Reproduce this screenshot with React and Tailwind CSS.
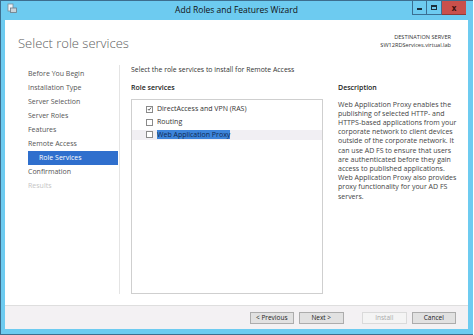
import React from "react";

const font = { fontFamily: '"Open Sans", "Noto Sans", sans-serif' };

function Checkbox({ checked }) {
  return (
    <span className="w-[7px] h-[7px] border border-[#8a8a8a] bg-white flex items-center justify-center shrink-0">
      {checked && (
        <svg width="6" height="6" viewBox="0 0 6 6">
          <path d="M1 3 L2.4 4.5 L5 1.2" fill="none" stroke="#333" strokeWidth="0.9" />
        </svg>
      )}
    </span>
  );
}

const navItems = [
  "Before You Begin",
  "Installation Type",
  "Server Selection",
  "Server Roles",
  "Features",
  "Remote Access",
];

const descLines = [
  "Web Application Proxy enables the",
  "publishing of selected HTTP- and",
  "HTTPS-based applications from your",
  "corporate network to client devices",
  "outside of the corporate network. It",
  "can use AD FS to ensure that users",
  "are authenticated before they gain",
  "access to published applications.",
  "Web Application Proxy also provides",
  "proxy functionality for your AD FS",
  "servers.",
];

export default function App() {
  return (
    <div className="w-[474px] h-[335px] bg-white overflow-hidden" style={font}>
      <div className="w-[473px] h-[335px] flex flex-col bg-[#6dcbf0] border-t border-l border-b border-[#3d6e8e] pl-[4px] pr-[5px]">
        {/* title bar */}
        <div className="h-[19px] flex items-start relative">
          <div className="w-[60px] flex items-center pt-[2px] pl-[2px]">
            <svg width="10" height="10" viewBox="0 0 10 10">
              <rect x="1" y="1" width="5" height="7" fill="#eef4f8" stroke="#7b8b96" strokeWidth="0.8" />
              <rect x="3.5" y="5" width="6" height="4.5" fill="#c9d3da" stroke="#6d7b85" strokeWidth="0.8" />
            </svg>
          </div>
          <div className="flex-1 h-[19px] flex items-center justify-center text-[8.5px] text-[#111]">
            Add Roles and Features Wizard
          </div>
          <div className="w-[60px] flex justify-end pr-[2px]">
            <div className="flex h-[14px]">
              <div className="w-[15px] h-[14px] border border-t-0 border-[#3b6f92] flex items-end justify-center pb-[4px]">
                <span className="w-[5px] h-[2px] bg-[#1c2f3c]" />
              </div>
              <div className="w-[15px] h-[14px] border-b border-r border-[#3b6f92] flex items-center justify-center">
                <span className="w-[6px] h-[5px] border-[1.5px] border-t-[2px] border-[#1c2f3c]" />
              </div>
              <div className="w-[24px] h-[14px] bg-[#c9504b] border-b border-[#8e3a36] flex items-center justify-center text-[8px] font-bold text-[#3a0f0d] leading-none">
                x
              </div>
            </div>
          </div>
        </div>

        {/* content */}
        <div className="h-[309px] bg-white flex flex-col">
          {/* header */}
          <div className="h-[45px] flex justify-between">
            <div className="pl-[13px] pt-[14px] text-[13px] leading-[18px] text-[#5e5e5e] font-light">
              Select role services
            </div>
            <div className="pr-[17px] pt-[13px] flex flex-col items-end text-[5.6px] leading-[8px] text-[#333]">
              <div>DESTINATION SERVER</div>
              <div>SW12RDServices.virtual.lab</div>
            </div>
          </div>

          {/* body */}
          <div className="h-[229px] flex">
            <div className="w-[115px] border-r border-[#e4e4e4] pt-[2px] text-[7px] text-[#555]">
              {navItems.map((n) => (
                <div key={n} className="h-[14px] flex items-center pl-[23px]">
                  {n}
                </div>
              ))}
              <div className="h-[14px] ml-[23px] mr-[1px] pl-[11px] flex items-center bg-[#2f6fcd] text-white">
                Role Services
              </div>
              <div className="h-[14px] flex items-center pl-[23px]">Confirmation</div>
              <div className="h-[14px] flex items-center pl-[23px] text-[#c4c4c4]">Results</div>
            </div>

            <div className="flex-1 pl-[11px] flex flex-col text-[7px] text-[#333]">
              <div className="h-[10px] flex items-center text-[6.9px]">
                Select the role services to install for Remote Access
              </div>
              <div className="flex mt-[8.5px]">
                <div className="w-[192px] flex flex-col">
                  <div className="h-[10px] flex items-center font-semibold text-[#222]">Role services</div>
                  <div className="mt-[5px] h-[195px] border border-[#cfcfcf] pt-[3.5px]">
                    <div className="h-[12.7px] flex items-center pl-[14px] gap-[4px]">
                      <Checkbox checked />
                      <span>DirectAccess and VPN (RAS)</span>
                    </div>
                    <div className="h-[12.7px] flex items-center pl-[14px] gap-[4px]">
                      <Checkbox />
                      <span>Routing</span>
                    </div>
                    <div className="h-[12.7px] flex items-center">
                      <div className="w-full h-[10px] bg-[#f1eff3] flex items-center pl-[14px] gap-[4px]">
                        <Checkbox />
                        <span className="bg-[#3d84da] text-[#0f2a52] leading-[9px]">Web Application Proxy</span>
                      </div>
                    </div>
                  </div>
                </div>
                <div className="ml-[15px] w-[125px] flex flex-col">
                  <div className="h-[10px] flex items-center font-semibold text-[#222]">Description</div>
                  <div className="mt-[6px] leading-[9.2px] text-[#444]">
                    {descLines.map((l) => (
                      <div key={l} className="whitespace-nowrap">{l}</div>
                    ))}
                  </div>
                </div>
              </div>
            </div>
          </div>

          {/* footer */}
          <div className="mt-[11px] h-[24px] border-t border-[#dedede] bg-[#f3f1f3] flex justify-end items-start pt-[5.7px] pr-[12px] text-[6.5px]">
            <div className="w-[44.5px] h-[12.7px] border border-[#acacac] bg-[#e1e1e1] flex items-center justify-center text-[#222]">
              &lt; Previous
            </div>
            <div className="ml-[5px] w-[44.5px] h-[12.7px] border border-[#acacac] bg-[#e1e1e1] flex items-center justify-center text-[#222]">
              Next &gt;
            </div>
            <div className="ml-[18.5px] w-[44.5px] h-[12.7px] border border-[#dadada] bg-[#f4f4f4] flex items-center justify-center text-[#a8a8a8]">
              Install
            </div>
            <div className="ml-[5px] w-[44.5px] h-[12.7px] border border-[#acacac] bg-[#e1e1e1] flex items-center justify-center text-[#222]">
              Cancel
            </div>
          </div>
        </div>
      </div>
    </div>
  );
}
